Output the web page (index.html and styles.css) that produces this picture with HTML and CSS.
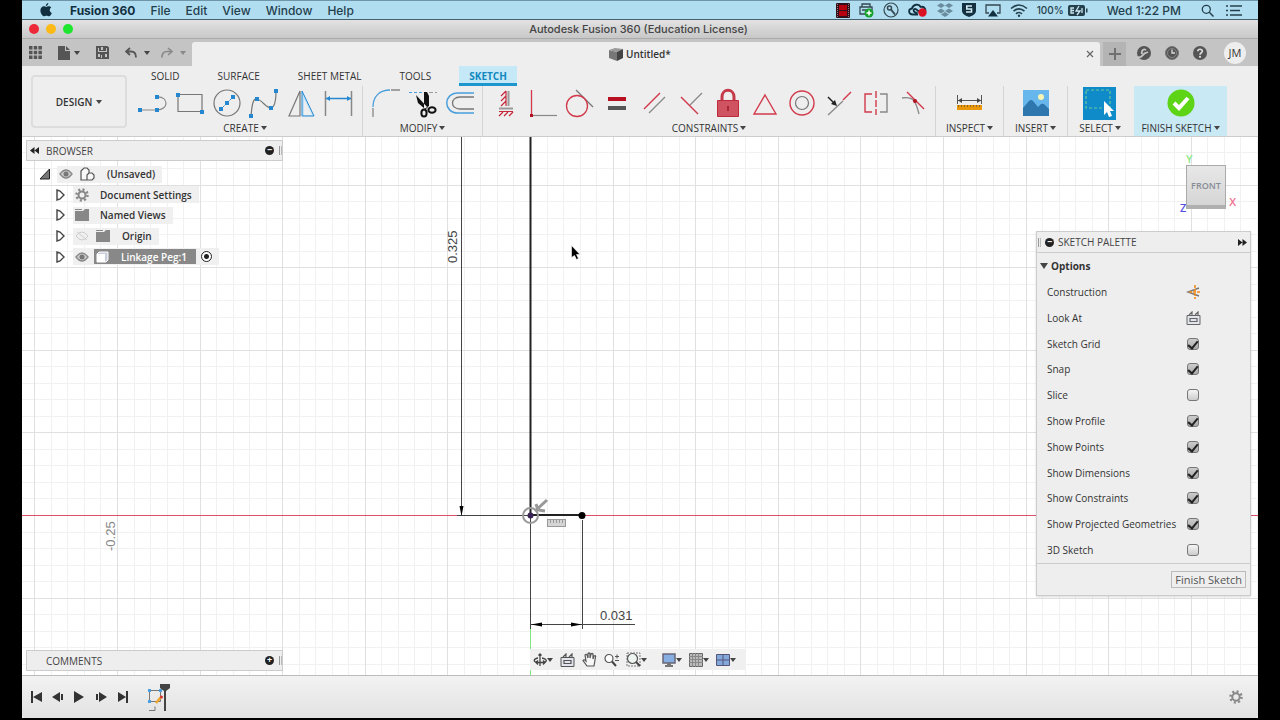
FILE: index.html
```html
<!DOCTYPE html>
<html lang="en">
<head>
    <meta charset="UTF-8">
    <meta name="viewport" content="width=device-width, initial-scale=1.0">
    <title>Autodesk Fusion 360 (Education License)</title>
    <link rel="stylesheet" href="styles.css">
</head>
<body>
<div class="app">
    <!-- system menu bar -->
    <header class="menubar">
        <nav class="menus">
            <svg class="apple" width="12" height="14" viewBox="0 0 12 14"><path fill="#12303f" d="M8.300 0C8.400 1.500 7.200 3 5.800 3 5.700 1.600 7 .2 8.300 0zM6.100 3.900c.6 0 1.500-.7 2.600-.7 1 0 2 .5 2.600 1.400-2.300 1.400-1.900 4.500.5 5.400C11.200 11.700 10.200 13.300 9 13.300c-1 0-1.300-.6-2.500-.6s-1.600.6-2.500.6C2.300 13.300.4 10.300.4 7.600c0-2.700 1.700-4.300 3.400-4.300 1.100 0 1.800.6 2.300.6z"/></svg>
            <a href="#" class="app-name">Fusion 360</a>
            <a href="#">File</a>
            <a href="#">Edit</a>
            <a href="#">View</a>
            <a href="#">Window</a>
            <a href="#">Help</a>
        </nav>
        <div class="status">
            <svg width="14" height="15" viewBox="0 0 14 15"><rect width="14" height="15" rx="1" fill="#30101a"/><path fill="#b4000f" d="M3 2h8v5H3zM3 8h8v5H3z"/><path stroke="#a77" stroke-dasharray="1 1" d="M1.500 1v13M12.500 1v13"/></svg>
            <svg width="15" height="15" viewBox="0 0 15 15"><path fill="none" stroke="#344850" stroke-width="1.300" d="M3 4V1h8v3M1 4h12v7H1zM3 7h8"/><circle cx="10" cy="10" r="4.500" fill="#16a02c"/><path stroke="#fff" stroke-width="1.500" d="M10 7.500v5M7.500 10h5"/></svg>
            <svg width="16" height="16" viewBox="0 0 16 16"><circle cx="8" cy="8" r="7" fill="none" stroke="#344850" stroke-width="1.200"/><circle cx="6.500" cy="6" r="2" fill="none" stroke="#344850" stroke-width="1.500"/><path stroke="#344850" stroke-width="2" d="M8 7.500l4 5"/></svg>
            <svg width="20" height="14" viewBox="0 0 20 14"><path fill="none" stroke="#12303f" stroke-width="1.800" d="M10 11.500H5C0 11.500 0 6 4 5.500 5 1 11 .5 12.500 4c3-1 5 1 5 4M9.500 10C4 9.500 5 4.500 8.500 6.500l4 3.500"/><circle cx="14.500" cy="9.500" r="4.200" fill="#dc1325"/></svg>
            <svg width="16" height="14" viewBox="0 0 16 14"><path fill="#6a8d9d" d="M4 0l4 2.500L4 5 0 2.500zM12 0l4 2.500L12 5 8 2.500zM4 5.500L8 8l-4 2.500L0 8zM12 5.500L16 8l-4 2.500L8 8zM8 9l4 2.500L8 14l-4-2.500z"/></svg>
            <svg width="14" height="14" viewBox="0 0 14 14"><path fill="#12303f" d="M0 0h14v8c0 3-4 5-7 6-3-1-7-3-7-6z"/><path fill="none" stroke="#d3ecf6" stroke-width="1.600" d="M10 3H4.800V6h4.700v3H4"/></svg>
            <svg width="16" height="13" viewBox="0 0 16 13"><path fill="none" stroke="#344850" stroke-width="1.300" d="M4 9H1V1h14v8h-3"/><path fill="#12303f" d="M8 6l5 6.500H3z"/></svg>
            <svg width="18" height="13" viewBox="0 0 18 13"><path fill="none" stroke="#24404c" stroke-width="1.600" d="M1 4.500q8-7 16 0M3.500 7.200q5.500-4.700 11 0M6 9.800q3-2.600 6 0"/><circle cx="9" cy="11.700" r="1.200" fill="#24404c"/></svg>
            <span class="battery">100%
                <svg width="20" height="11" viewBox="0 0 20 11"><rect width="17" height="11" rx="2" fill="#24404c"/><path fill="#24404c" d="M18 3.500h1.500v4H18z"/><path fill="none" stroke="#cde8f3" stroke-width="1.300" d="M6 3H3v5h3M3 5.500h3M11 1L8 6h4l-3 4M14 3v5"/></svg>
            </span>
            <span class="clock">Wed 1:22 PM</span>
            <svg class="search" width="13" height="13" viewBox="0 0 13 13"><circle cx="5.300" cy="5.300" r="4" fill="none" stroke="#24404c" stroke-width="1.300"/><path stroke="#24404c" stroke-width="1.500" d="M8.300 8.300L12.500 12.500"/></svg>
            <svg width="16" height="11" viewBox="0 0 16 11"><path stroke="#24404c" stroke-width="1.500" d="M0 1h2M4 1h12M0 5.500h2M4 5.500h10M0 10h2M4 10h12"/></svg>
        </div>
    </header>

    <!-- window title -->
    <div class="titlebar">
        <span class="light red"></span><span class="light amber"></span><span class="light green"></span>
        <h1>Autodesk Fusion 360 (Education License)</h1>
    </div>

    <!-- document tabs -->
    <div class="tabbar">
        <div class="quick">
            <button class="q-grid"><svg width="13" height="13" viewBox="0 0 13 13"><path fill="#555" d="M0 0h3.500v3.500H0zM4.700 0h3.500v3.500H4.700zM9.400 0h3.500v3.500H9.400zM0 4.700h3.500v3.500H0zM4.700 4.700h3.500v3.500H4.700zM9.400 4.700h3.500v3.500H9.400zM0 9.400h3.500v3.500H0zM4.700 9.400h3.500v3.500H4.700zM9.400 9.400h3.500v3.500H9.400z"/></svg></button>
            <button class="q-file"><svg width="12" height="14" viewBox="0 0 12 14"><path fill="#555" d="M0 0h7v5h5v9H0zM8 0l4 4H8z"/></svg><i class="caret"></i></button>
            <button class="q-save"><svg width="13" height="13" viewBox="0 0 13 13"><path fill="none" stroke="#555" stroke-width="2" d="M1 1h10l1 1v10H1z"/><path fill="#555" d="M3 0h7v5H3zM2 6h9v2H2zM4 8h5v5H4z"/><path fill="#c4c4c4" d="M5 1h2v3H5zM5 9h1v3H5z"/></svg></button>
            <button class="q-undo"><svg width="12" height="12" viewBox="0 0 12 12"><path fill="none" stroke="#555" stroke-width="1.800" d="M5 1L1 4.500 5 8M1 4.500h5c4 0 5 2.500 5 6"/></svg><i class="caret"></i></button>
            <button class="q-redo"><svg width="12" height="12" viewBox="0 0 12 12"><path fill="none" stroke="#8a8a8a" stroke-width="1.600" d="M7 1l4 3.500L7 8M11 4.500H6c-4 0-5 2.500-5 6"/></svg><i class="caret"></i></button>
        </div>
        <div class="doc-tab">
            <svg width="14" height="13" viewBox="0 0 14 13"><path fill="#777" d="M0 2l8 2v9L0 10z"/><path fill="#999" d="M0 2l6-2 8 1-6 3z"/><path fill="#444" d="M8 4l6-3v9l-6 3z"/></svg>
            <span>Untitled*</span>
            <button class="close"><svg width="8" height="8" viewBox="0 0 8 8"><path stroke="#666" stroke-width="1.200" d="M1 1l6 6M7 1L1 7"/></svg></button>
        </div>
        <button class="new-tab"><svg width="12" height="12" viewBox="0 0 12 12"><path stroke="#707070" stroke-width="2" d="M6 0v12M0 6h12"/></svg></button>
        <div class="account">
            <button><svg width="14" height="14" viewBox="0 0 14 14"><circle cx="7" cy="7" r="7" fill="#555"/><path fill="none" stroke="#c4c4c4" stroke-width="1.800" d="M0 11.500l4-.5 4-4M5 8C4 4 7 2.500 9 4M7.500 7.500L11 6"/></svg></button>
            <button><svg width="14" height="14" viewBox="0 0 14 14"><circle cx="7" cy="7" r="6.500" fill="#555" stroke="#777"/><circle cx="7" cy="7" r="4.500" fill="none" stroke="#999" stroke-width=".7"/><path fill="none" stroke="#ddd" stroke-width="1.300" d="M7 3.500V7h3"/></svg></button>
            <button><svg width="14" height="14" viewBox="0 0 14 14"><circle cx="7" cy="7" r="7" fill="#555"/><path fill="none" stroke="#ddd" stroke-width="1.700" d="M4.800 5.300C5 2.500 9.500 2.700 9.300 5.300 9.200 6.800 7 7 7 8.800"/><circle cx="7" cy="10.800" r="1.100" fill="#ddd"/></svg></button>
            <button class="avatar">JM</button>
        </div>
    </div>

    <!-- ribbon -->
    <div class="ribbon">
        <button class="workspace">DESIGN <i class="caret"></i></button>
        <div class="ribbon-main">
            <nav class="ribbon-tabs">
                <button>SOLID</button>
                <button>SURFACE</button>
                <button>SHEET METAL</button>
                <button>TOOLS</button>
                <button class="active">SKETCH</button>
            </nav>
            <div class="groups">
                <section class="group create">
                    <div class="tools">
                        <button><svg width="30" height="30" viewBox="0 0 30 30"><path fill="none" stroke="#888" stroke-width="1.200" d="M2 22h17M19 9c12-1 12 13 0 13"/><path fill="#2487cf" d="M0 20h4v4H0zM17 20h4v4h-4zM17 7h4v4h-4z"/></svg></button>
                        <button><svg width="30" height="30" viewBox="0 0 30 30"><path fill="none" stroke="#777" stroke-width="1.200" d="M3 6.500h24v17H3z"/><path fill="#2487cf" d="M1 5h4v4H1zM25 22h4v4h-4z"/></svg></button>
                        <button><svg width="30" height="30" viewBox="0 0 30 30"><circle cx="15" cy="15" r="13" fill="none" stroke="#777" stroke-width="1.200"/><path stroke="#2487cf" stroke-dasharray="2 1" d="M9 21L21 9"/><path fill="#2487cf" d="M7 19h4v4H7zM13 13h4v4h-4zM19 7h4v4h-4z"/></svg></button>
                        <button><svg width="30" height="30" viewBox="0 0 30 30"><path fill="none" stroke="#777" stroke-width="1.200" d="M2 28C3 17 4 10 8 11c5 1 9 9 14 9 4-1 5-8 5-17"/><path fill="#2487cf" d="M0 26h4v4H0zM6 9h4v4H6zM20 18h4v4h-4zM25 1h4v4h-4z"/></svg></button>
                        <button><svg width="30" height="30" viewBox="0 0 30 30"><path fill="none" stroke="#777" stroke-width="1.200" d="M14 3v25H3z"/><path fill="#bfe2f6" stroke="#2487cf" d="M16 3l12 25H16z"/><path fill="#eee" d="M18 11l8 16h-8z"/></svg></button>
                        <button><svg width="30" height="30" viewBox="0 0 30 30"><path stroke="#888" stroke-width="1.500" d="M2.500 3v25M28.500 3v25"/><path stroke="#2487cf" stroke-width="1.500" d="M3 10.500h25"/><path fill="#2487cf" d="M3 10.500l4-2.500v5zM28 10.500l-4-2.500v5z"/></svg></button>
                    </div>
                    <button class="group-label">CREATE <i class="caret"></i></button>
                </section>
                <section class="group">
                    <div class="tools">
                        <button><svg width="30" height="30" viewBox="0 0 30 30"><path fill="none" stroke="#4a9fdc" stroke-width="1.300" d="M2 19C2 8 9 2 19 2"/><path stroke="#888" stroke-width="1.300" d="M2 20v9M20 2h9"/></svg></button>
                        <button><svg width="30" height="30" viewBox="0 0 30 30"><path stroke="#4a9fdc" stroke-dasharray="3 2" d="M1 4.500h13"/><path stroke="#999" stroke-dasharray="4 2" d="M21 4.500h8"/><path fill="#111" d="M8 7l2 8 7 6 3-1zM16 4h3l2 4v10l-5 3z"/><g fill="none" stroke="#111" stroke-width="2"><ellipse cx="16" cy="25" rx="2.600" ry="3.500"/><ellipse cx="24" cy="22" rx="3.600" ry="2.800"/></g></svg></button>
                        <button><svg width="30" height="30" viewBox="0 0 30 30"><path fill="none" stroke="#4a9fdc" stroke-width="1.500" d="M29 5H13C-2 5-2 25 13 25h16"/><path fill="none" stroke="#777" stroke-width="1.300" d="M29 9H15c-10 0-10 12 0 12h14"/></svg></button>
                    </div>
                    <button class="group-label">MODIFY <i class="caret"></i></button>
                </section>
                <section class="group">
                    <div class="tools">
                        <button><svg width="30" height="30" viewBox="0 0 30 30"><path stroke="#999" stroke-width="2" d="M17.500 3v15M8 20.500h14"/><path fill="none" stroke="#c6283b" stroke-width="1.200" d="M15 3v15M10 8l5-5M10 13l5-5M10 18l5-5M8 23.500h14M8 28l4-4M13 28l4-4M18 28l4-4"/></svg></button>
                        <button><svg width="30" height="30" viewBox="0 0 30 30"><path stroke="#888" stroke-width="1.200" d="M4 27.500h25"/><path stroke="#d23a4c" stroke-width="1.300" d="M3.500 2v26"/><path fill="#b31022" d="M2 26h3v3H2z"/></svg></button>
                        <button><svg width="30" height="30" viewBox="0 0 30 30"><path stroke="#777" stroke-width="1.200" d="M11 2l17 17"/><circle cx="12" cy="18" r="10.500" fill="none" stroke="#d23a4c" stroke-width="1.300"/></svg></button>
                        <button><svg width="30" height="30" viewBox="0 0 30 30"><path fill="#b80f21" d="M6 9h18v4H6z"/><path fill="#555" d="M6 18h18v4H6z"/></svg></button>
                        <button><svg width="30" height="30" viewBox="0 0 30 30"><path stroke="#d23a4c" stroke-width="1.400" d="M5 21L21 5"/><path stroke="#888" stroke-width="1.200" d="M10 25L26 9"/></svg></button>
                        <button><svg width="30" height="30" viewBox="0 0 30 30"><path stroke="#888" stroke-width="1.200" d="M14 17L26 5"/><path stroke="#d23a4c" stroke-width="1.400" d="M5 9l17 17"/></svg></button>
                        <button><svg width="30" height="30" viewBox="0 0 30 30"><path fill="none" stroke="#c43a49" stroke-width="3" d="M9 13V9C9 0 21 0 21 9v4"/><path fill="#d05362" stroke="#bd2b3d" d="M4.500 12.500h21v16h-21z"/><path stroke="#9e1728" stroke-width="1.500" d="M15 18v5"/></svg></button>
                        <button><svg width="30" height="30" viewBox="0 0 30 30"><path fill="none" stroke="#d23a4c" stroke-width="1.400" d="M15 7l11 19H4z"/></svg></button>
                        <button><svg width="30" height="30" viewBox="0 0 30 30"><circle cx="15" cy="15" r="12" fill="none" stroke="#d23a4c" stroke-width="1.400"/><circle cx="15" cy="15" r="6.500" fill="none" stroke="#777" stroke-width="1.200"/></svg></button>
                        <button><svg width="30" height="30" viewBox="0 0 30 30"><path stroke="#888" stroke-width="1.300" d="M4 27l15-14"/><path stroke="#d23a4c" stroke-width="1.400" d="M19 12l8-8"/><path stroke="#222" stroke-width="1.500" d="M4 9l7 7"/><path fill="#222" d="M13 18l-6-2 4-4z"/></svg></button>
                        <button><svg width="30" height="30" viewBox="0 0 30 30"><path fill="none" stroke="#d23a4c" stroke-width="1.400" d="M11 6H4v18h7"/><path stroke="#d23a4c" stroke-width="1.400" stroke-dasharray="7 2" d="M15 3v24"/><path fill="none" stroke="#888" stroke-width="1.400" d="M19 6h7v18h-7"/></svg></button>
                        <button><svg width="30" height="30" viewBox="0 0 30 30"><path fill="none" stroke="#888" stroke-width="1.300" d="M4 10c12-2 14 4 17 16"/><path stroke="#d23a4c" stroke-width="1.400" d="M9 4l17 17"/><circle cx="17" cy="13" r="2" fill="#b31022"/></svg></button>
                    </div>
                    <button class="group-label">CONSTRAINTS <i class="caret"></i></button>
                </section>
                <section class="group inspect">
                    <div class="tools">
                        <button><svg width="30" height="30" viewBox="0 0 30 30"><path stroke="#555" d="M2.500 7v9M26.500 7v9M3 12.500h23"/><path fill="#444" d="M3 12.500l4-2.500v5zM26 12.500l-4-2.500v5z"/><path fill="#e9980c" d="M2 17h25v5H2z"/><path stroke="#936619" stroke-dasharray="1 2" stroke-width="2" d="M3 18h23"/></svg></button>
                    </div>
                    <button class="group-label">INSPECT <i class="caret"></i></button>
                </section>
                <section class="group insert">
                    <div class="tools">
                        <button><svg width="30" height="30" viewBox="0 0 30 30"><path fill="#67b6ec" d="M2 2h26v26H2z"/><path fill="#2e76ae" d="M2 20l6-7q2-2 4 0l5 6 3-3q2-1 4 1l4 4v7H2z"/><circle cx="20" cy="9" r="3" fill="#f7f4b4"/></svg></button>
                    </div>
                    <button class="group-label">INSERT <i class="caret"></i></button>
                </section>
                <section class="group select">
                    <div class="tools">
                        <button><svg width="34" height="34" viewBox="0 0 34 34"><path fill="#108bc9" d="M0 1h33v33H0z"/><path fill="none" stroke="#69c99b" stroke-width="1.200" stroke-dasharray="3 2" d="M3 4h24v18H3z"/><path fill="#fff" d="M21 15v14l3-3 2 5 3-1-2-5h4z"/></svg></button>
                    </div>
                    <button class="group-label">SELECT <i class="caret"></i></button>
                </section>
                <section class="group finish">
                    <div class="tools">
                        <button><svg width="30" height="30" viewBox="0 0 30 30"><circle cx="15" cy="15" r="13.500" fill="#5dd416"/><path fill="none" stroke="#fff" stroke-width="4" d="M8 15l5 5 9-10"/></svg></button>
                    </div>
                    <button class="group-label">FINISH SKETCH <i class="caret"></i></button>
                </section>
            </div>
        </div>
    </div>

    <!-- drawing area -->
    <main class="canvas">
        <svg class="sketch" width="100%" height="100%">
            <defs>
                <pattern id="grid" x="508" y="378" width="413" height="413" patternUnits="userSpaceOnUse">
                    <path class="minor" d="M17.500 0v413M33.500 0v413M50.500 0v413M66.500 0v413M99.500 0v413M116.500 0v413M132.500 0v413M149.500 0v413M182.500 0v413M198.500 0v413M215.500 0v413M231.500 0v413M264.500 0v413M281.500 0v413M297.500 0v413M314.500 0v413M347.500 0v413M363.500 0v413M380.500 0v413M396.500 0v413"/>
                    <path class="minor" d="M0 17.500h413M0 33.500h413M0 50.500h413M0 66.500h413M0 99.500h413M0 116.500h413M0 132.500h413M0 149.500h413M0 182.500h413M0 198.500h413M0 215.500h413M0 231.500h413M0 264.500h413M0 281.500h413M0 297.500h413M0 314.500h413M0 347.500h413M0 363.500h413M0 380.500h413M0 396.500h413"/>
                    <path class="major" d="M.5 0v413M83.500 0v413M165.500 0v413M248.500 0v413M330.500 0v413M0 .5h413M0 83.500h413M0 165.500h413M0 248.500h413M0 330.500h413"/>
                </pattern>
            </defs>
            <rect width="100%" height="100%" fill="url(#grid)"/>
            <rect class="x-line" y="378" width="100%" height="1"/>
            <g transform="translate(-22 -137)">
                <path stroke="#7ee87e" d="M530.500 625v50"/>
                <path class="dim" d="M461.500 137v378M457 515.500h73M530.500 516v113M582.500 520v109M531 624.500h104"/>
                <path class="edge" d="M530.500 137v378h52"/>
                <path d="M461.500 516l-2-10h4zM531 624.500l11-2v4zM582 624.500l-11-2v4z"/>
                <circle cx="582" cy="515.500" r="3.500"/>
                <g fill="none" stroke="#999">
                    <circle cx="530.500" cy="515.500" r="7.500" stroke-width="2"/>
                    <path stroke-width="3" d="M535 511l12-11M536 504l2 6 7 1"/>
                </g>
                <circle cx="530.500" cy="515.500" r="3" fill="#3b2455"/>
                <rect x="547.500" y="519.500" width="18" height="7" fill="#d5d5d5" stroke="#999"/>
                <path stroke="#999" d="M550.500 520v3M553.500 520v3M556.500 520v3M559.500 520v3M562.500 520v3"/>
                <text class="dim-text" x="600" y="620">0.031</text>
                <text class="dim-text" transform="translate(457 263) rotate(-90)">0.325</text>
                <text class="dim-text faint" transform="translate(115 551) rotate(-90)">-0.25</text>
                <path stroke="#fff" stroke-width=".6" d="M571.500 245.500v12l3-2 2 4 2-1-2-4h3.500z"/>
            </g>
        </svg>

        <aside class="browser">
            <header class="panel-head">
                <svg width="9" height="7" viewBox="0 0 9 7"><path fill="#222" d="M4.500 0v7L0 3.500zM9 0v7L4.500 3.500z"/></svg>
                <h2>BROWSER</h2>
                <span class="dot">&#8722;</span><i class="grip"></i>
            </header>
            <ul class="tree">
                <li class="root">
                    <svg width="12" height="12" viewBox="0 0 12 12"><path fill="#777" stroke="#222" d="M10.500 1v10H1z"/></svg>
                    <span class="node">
                        <svg width="14" height="10" viewBox="0 0 14 10"><path fill="#ccc" stroke="#888" stroke-width="1.300" d="M1 5q6-8 12 0-6 8-12 0z"/><circle cx="7" cy="5" r="2.500" fill="#777"/></svg>
                        <svg class="comp" width="15" height="14" viewBox="0 0 15 14"><path fill="#f8f8f8" stroke="#555" stroke-width="1.200" d="M1 4l3-3h3l2 2v3h3l2 2v3l-2 2H1zM7 13V8l2-2"/></svg>
                        <span>(Unsaved)</span>
                    </span>
                </li>
                <li>
                    <svg class="arrow" width="9" height="12" viewBox="0 0 9 12"><path fill="#fff" stroke="#444" stroke-width="1.400" d="M1 1v10l3-1 4-4-4-4z"/></svg>
                    <span class="node">
                        <svg width="14" height="14" viewBox="0 0 14 14"><circle cx="7" cy="7" r="5.500" fill="none" stroke="#888" stroke-width="2.500" stroke-dasharray="2 2.300"/><circle cx="7" cy="7" r="3.500" fill="none" stroke="#888" stroke-width="2"/></svg>
                        <span>Document Settings</span>
                    </span>
                </li>
                <li>
                    <svg class="arrow" width="9" height="12" viewBox="0 0 9 12"><path fill="#fff" stroke="#444" stroke-width="1.400" d="M1 1v10l3-1 4-4-4-4z"/></svg>
                    <span class="node">
                        <svg width="14" height="12" viewBox="0 0 14 12"><path fill="#888" d="M0 2h8l2-2h4v12H0zM0 0h7v1H0z"/></svg>
                        <span>Named Views</span>
                    </span>
                </li>
                <li>
                    <svg class="arrow" width="9" height="12" viewBox="0 0 9 12"><path fill="#fff" stroke="#444" stroke-width="1.400" d="M1 1v10l3-1 4-4-4-4z"/></svg>
                    <span class="node nested">
                        <svg width="14" height="10" viewBox="0 0 14 10"><path fill="none" stroke="#ccc" d="M1 5q6-8 12 0-6 8-12 0zM2 1l10 8"/></svg>
                        <svg width="14" height="12" viewBox="0 0 14 12"><path fill="#888" d="M0 2h8l2-2h4v12H0zM0 0h7v1H0z"/></svg>
                        <span>Origin</span>
                    </span>
                </li>
                <li>
                    <svg class="arrow" width="9" height="12" viewBox="0 0 9 12"><path fill="#fff" stroke="#444" stroke-width="1.400" d="M1 1v10l3-1 4-4-4-4z"/></svg>
                    <span class="node with-radio">
                        <svg width="14" height="10" viewBox="0 0 14 10"><path fill="#ccc" stroke="#888" stroke-width="1.300" d="M1 5q6-8 12 0-6 8-12 0z"/><circle cx="7" cy="5" r="2.500" fill="#777"/></svg>
                        <span class="selected">
                            <svg width="13" height="12" viewBox="0 0 13 12"><path fill="#c9cede" stroke="#fff" d="M1 3l2-2h9v8l-2 2H1z"/><path fill="#fff" d="M1 3h8v8H1z"/></svg>
                            <label for="activate">Linkage Peg:1</label>
                        </span>
                        <input type="radio" id="activate" checked>
                    </span>
                </li>
            </ul>
        </aside>

        <div class="cube">
            <span class="axis y">Y</span>
            <span class="axis z">Z</span>
            <span class="axis x">X</span>
            <button class="face">FRONT</button>
        </div>

        <aside class="palette">
            <header class="panel-head">
                <i class="grip"></i><span class="dot">&#8722;</span>
                <h2>SKETCH PALETTE</h2>
                <svg width="9" height="7" viewBox="0 0 9 7"><path fill="#222" d="M0 0v7l4.500-3.500zM4.500 0v7L9 3.500z"/></svg>
            </header>
            <h3><i class="caret"></i>Options</h3>
            <div class="options">
                <div class="row"><label for="construction">Construction</label><button id="construction"><svg width="15" height="14" viewBox="0 0 15 14"><path fill="none" stroke="#777" stroke-width="1.400" d="M13 3L2 7l11 4"/><path stroke="#f08c1c" stroke-width="1.600" stroke-dasharray="3 1" d="M9 0v14M3 7h11"/></svg></button></div>
                <div class="row"><label for="lookat">Look At</label><button id="lookat"><svg width="15" height="14" viewBox="0 0 15 14"><path fill="#e1e4ec" stroke="#666" d="M1 4.500h13v9H1z"/><path fill="none" stroke="#666" stroke-width="1.200" d="M4 7.500h7v3H4zM3 4l3-3v3M9 4l3-3v3"/></svg></button></div>
                <div class="row"><label for="grid-on">Sketch Grid</label><input type="checkbox" id="grid-on" checked></div>
                <div class="row"><label for="snap">Snap</label><input type="checkbox" id="snap" checked></div>
                <div class="row"><label for="slice">Slice</label><input type="checkbox" id="slice"></div>
                <div class="row"><label for="profile">Show Profile</label><input type="checkbox" id="profile" checked></div>
                <div class="row"><label for="points">Show Points</label><input type="checkbox" id="points" checked></div>
                <div class="row"><label for="dimensions">Show Dimensions</label><input type="checkbox" id="dimensions" checked></div>
                <div class="row"><label for="constraints">Show Constraints</label><input type="checkbox" id="constraints" checked></div>
                <div class="row"><label for="projected">Show Projected Geometries</label><input type="checkbox" id="projected" checked></div>
                <div class="row"><label for="sketch3d">3D Sketch</label><input type="checkbox" id="sketch3d"></div>
            </div>
            <footer><button>Finish Sketch</button></footer>
        </aside>

        <section class="comments panel-head">
            <h2>COMMENTS</h2>
            <span class="dot">+</span><i class="grip"></i>
        </section>

        <div class="navbar">
            <button><svg width="14" height="14" viewBox="0 0 14 14"><path fill="none" stroke="#444" stroke-width="1.300" d="M7 1v12M5.500 2.500L7 1l1.500 1.500M5 5C0 6 0 9 5 9.500h7M9 5c5 1 5 3 3 4M5 7.500l-2 2 2 2M10 7.500l2 2-2 2"/></svg><i class="caret"></i></button>
            <button><svg width="15" height="14" viewBox="0 0 15 14"><path fill="#e1e4ec" stroke="#555" d="M1 4.500h13v9H1z"/><path fill="none" stroke="#555" stroke-width="1.200" d="M4 7.500h7v3H4zM3 4l3-3v3M9 4l3-3v3"/></svg></button>
            <button><svg width="15" height="15" viewBox="0 0 15 15"><path fill="#f8f8f8" stroke="#555" stroke-width="1.200" d="M5 14L1 8.500q1-1.500 3 .5L3 3q1-1.500 2 0l1 3V1.500q1-1 2 0V6l1-4q1-1 2 0v5l1-3q2-1 1.500 1L12 14z"/></svg></button>
            <button><svg width="15" height="14" viewBox="0 0 15 14"><circle cx="5" cy="5.500" r="4" fill="#fff" stroke="#555" stroke-width="1.200"/><path stroke="#444" stroke-width="2" d="M8 8.500l4 4.500"/><path stroke="#555" d="M11 3.500h4M13 1.500v4M11 7.500h4"/></svg></button>
            <button class="fit"><svg width="15" height="15" viewBox="0 0 15 15"><path fill="none" stroke="#777" stroke-dasharray="2 1" d="M1 1h13v13H1z"/><circle cx="6.500" cy="6.500" r="5" fill="#eef5f1" stroke="#555" stroke-width="1.200"/><path stroke="#444" stroke-width="2" d="M10 10l4 4"/></svg><i class="caret"></i></button>
            <button><svg width="14" height="14" viewBox="0 0 14 14"><path fill="#86aee2" stroke="#667" stroke-width="1.500" d="M1 1h12v9H1z"/><path fill="#777" d="M5 10h4v2h2v2H3v-2h2z"/></svg><i class="caret"></i></button>
            <button><svg width="14" height="14" viewBox="0 0 14 14"><path fill="#bbb" stroke="#666" d="M.5.5h13v13H.5z"/><path stroke="#888" d="M3.500 0v14M6.500 0v14M9.500 0v14M0 3.500h14M0 6.500h14M0 9.500h14"/></svg><i class="caret"></i></button>
            <button><svg width="14" height="12" viewBox="0 0 14 12"><path fill="#83a8dc" stroke="#557" d="M.5.5h13v11H.5zM7 0v12M0 6h14"/></svg><i class="caret"></i></button>
        </div>
    </main>

    <!-- timeline -->
    <footer class="timeline">
        <div class="playback">
            <button><svg width="12" height="12" viewBox="0 0 12 12"><path fill="#333" d="M1 0h2v12H1zM12 1v10L3 6z"/></svg></button>
            <button><svg width="12" height="12" viewBox="0 0 12 12"><path fill="#333" d="M8 1v10L0 6zM9 3h2v6H9z"/></svg></button>
            <button><svg width="12" height="12" viewBox="0 0 12 12"><path fill="#333" d="M0 0v12l10-6z"/></svg></button>
            <button><svg width="12" height="12" viewBox="0 0 12 12"><path fill="#333" d="M3 1v10l8-5zM0 3h2v6H0z"/></svg></button>
            <button><svg width="12" height="12" viewBox="0 0 12 12"><path fill="#333" d="M8 0h2v12H8zM0 1v10l8-5z"/></svg></button>
        </div>
        <button class="feature"><svg width="24" height="28" viewBox="0 0 24 28"><path fill="none" stroke="#777" d="M2.500 7.500h11v11h-11zM2 27.500h6v-4"/><path fill="#4a9fdc" d="M1 6h3v3H1zM12 6h3v3h-3zM1 17h3v3H1z"/><path stroke="#eda52c" stroke-width="2.500" d="M9 20l5-6"/><circle cx="14.500" cy="14" r="1.500" fill="#d33"/><path fill="#444" d="M13 1h10v4l-4 3v20h-2V8l-4-3z"/></svg></button>
        <button class="settings"><svg width="14" height="14" viewBox="0 0 14 14"><circle cx="7" cy="7" r="5.500" fill="none" stroke="#888" stroke-width="2.500" stroke-dasharray="2 2.300"/><circle cx="7" cy="7" r="3.700" fill="none" stroke="#888" stroke-width="2"/></svg></button>
    </footer>
</div>
</body>
</html>
```
FILE: styles.css
```css
* {
    box-sizing: border-box;
}
body {
    margin: 0;
    padding: 0 22px 2px;
    background-color: #000;
    font-family: 'Open Sans', 'Noto Sans', sans-serif;
    font-size: 10px;
    color: #333;
}
h1, h2, h3, ul {
    margin: 0;
    padding: 0;
}
button {
    display: flex;
    align-items: center;
    justify-content: center;
    padding: 0;
    border: none;
    background: none;
    font: inherit;
    color: inherit;
    white-space: nowrap;
}
svg {
    display: block;
    flex: none;
}
.caret {
    flex: none;
    border: 3px solid transparent;
    border-top: 4px solid #444;
    border-bottom: none;
}
.app {
    display: flex;
    flex-direction: column;
    min-height: calc(100vh - 2px);
    background-color: #eee;
}

/* system menu bar */
.menubar {
    display: flex;
    justify-content: space-between;
    align-items: center;
    height: 20px;
    padding: 0 16px 0 18px;
    background-color: #b1ddf0;
    border-top: 1px solid #6f96a8;
    border-bottom: 1px solid #45606f;
    font-family: Inter, sans-serif;
    font-size: 12px;
    font-weight: 500;
}
.menus, .status {
    display: flex;
    align-items: center;
}
.menus {
    gap: 15px;
}
.menus a {
    color: #24404c;
    text-decoration: none;
}
.menus .app-name {
    margin-left: 3px;
    font-weight: 700;
    color: #12303f;
}
.status {
    gap: 9px;
    color: #24404c;
}
.battery {
    display: flex;
    align-items: center;
    gap: 4px;
    font-size: 10px;
}
.clock {
    margin: 0 11px 0 10px;
}
.search {
    margin-right: 3px;
}

/* window title */
.titlebar {
    display: flex;
    align-items: center;
    gap: 7px;
    height: 19px;
    padding: 0 7px;
    background: linear-gradient(#e2e2e2, #c8c8c8);
    border-bottom: 1px solid #aaa;
}
.titlebar h1 {
    flex: 1;
    padding-right: 54px;
    text-align: center;
    font: 500 11px Inter, sans-serif;
    color: #444;
}
.light {
    width: 10px;
    height: 10px;
    border-radius: 50%;
}
.red { background-color: #ed2939; }
.amber { background-color: #fdb915; }
.green { background-color: #1ee52d; }

/* document tabs */
.tabbar {
    display: flex;
    height: 27px;
    padding-top: 3px;
    background-color: #c4c4c4;
}
.quick {
    display: flex;
    align-items: center;
    width: 170px;
    padding: 0 7px 3px;
    gap: 16px;
}
.quick button {
    gap: 4px;
}
.q-redo .caret {
    border-top-color: #888;
}
.quick .q-undo, .quick .q-redo {
    gap: 7px;
}
.quick .q-redo {
    margin-left: -5px;
}
.doc-tab {
    flex: 1;
    display: flex;
    align-items: center;
    gap: 3px;
    padding: 0 6px 0 417px;
    background-color: #eee;
    border-radius: 3px 3px 0 0;
    font-weight: 600;
}
.close {
    margin-left: auto;
}
.new-tab {
    width: 23px;
    margin-left: 3px;
    background-color: #b4b4b4;
}
.account {
    display: flex;
    align-items: center;
    gap: 14px;
    padding: 0 12px 3px 11px;
}
.account .avatar {
    width: 22px;
    height: 22px;
    margin-left: 3px;
    border-radius: 50%;
    background-color: #eee;
    font-size: 11px;
    font-weight: 500;
}

/* ribbon */
.ribbon {
    display: flex;
    height: 71px;
    padding-left: 9px;
    border-bottom: 1px solid #ccc;
    font-weight: 500;
}
.workspace {
    width: 96px;
    height: 53px;
    margin: 9px 5px 0 0;
    gap: 4px;
    border: 2px solid #ddd;
    border-radius: 4px;
    font-weight: 600;
}
.ribbon-main {
    flex: 1;
}
.ribbon-tabs {
    display: flex;
    gap: 18px;
    height: 20px;
    padding-left: 9px;
}
.ribbon-tabs button {
    padding: 0 10px;
}
.ribbon-tabs .active {
    background-color: #c5e9f7;
    border-bottom: 3px solid #1d96cd;
    color: #1188c0;
    font-weight: 700;
    padding-top: 3px;
}
.groups {
    display: flex;
    height: 50px;
}
.group {
    display: flex;
    flex-direction: column;
    align-items: center;
    padding: 0 4px;
    border-right: 1px solid #d5d5d5;
}
.group.create {
    padding: 0 6px 0 2px;
}
.tools {
    display: flex;
}
.tools button {
    width: 37px;
    height: 34px;
}
.group-label {
    height: 16px;
    gap: 2px;
}
.inspect { width: 68px; }
.insert, .select { width: 64px; }
.group.select {
    border-right: none;
}
.finish {
    width: 93px;
    margin-left: 2px;
    border-right: none;
    background-color: #c9e9f4;
}

/* drawing area */
.canvas {
    position: relative;
    flex: 1;
    min-height: 538px;
    overflow: hidden;
    background-color: #fff;
}
.sketch {
    position: absolute;
    inset: 0;
}
.minor { stroke: #f1f1f1; }
.major { stroke: #e0e0e0; }
.x-line { fill: #dc5068; }
.dim { stroke: #444; fill: none; }
.edge { stroke: #222; stroke-width: 2; fill: none; }
.dim-text {
    font: 13px 'Liberation Sans', sans-serif;
    fill: #444;
}
.faint { fill: #888; }

.panel-head {
    display: flex;
    align-items: center;
    height: 21px;
    background-color: #eee;
    border: 1px solid #ccc;
}
.panel-head h2 {
    flex: 1;
    font-size: 10px;
    font-weight: 500;
    color: #444;
}
.dot {
    width: 9px;
    height: 9px;
    border-radius: 50%;
    background-color: #222;
    color: #fff;
    font-size: 9px;
    font-weight: 700;
    line-height: 8px;
    text-align: center;
}
.grip {
    width: 3px;
    height: 9px;
    border-left: 1px solid #999;
    border-right: 1px solid #bbb;
}
.browser {
    position: absolute;
    left: 4px;
    top: 3px;
    width: 257px;
}
.browser .panel-head, .comments {
    gap: 5px;
}
.browser .panel-head {
    padding-left: 3px;
}
.browser h2 {
    padding-left: 2px;
}
.comments {
    position: absolute;
    left: 4px;
    bottom: 4px;
    width: 257px;
    padding-left: 19px;
}

.tree {
    display: grid;
    height: 103px;
    margin-top: 3px;
    padding-left: 28px;
    list-style: none;
    font-weight: 600;
}
.tree li {
    display: flex;
    align-items: center;
    gap: 8px;
}
.tree .root {
    gap: 6px;
    margin-left: -15px;
}
.tree .arrow {
    margin-left: 2px;
}
.node {
    display: flex;
    align-items: center;
    gap: 11px;
    height: 17px;
    padding: 0 7px 0 2px;
    background-color: #f0f0f0;
}
.root .node {
    padding-left: 2px;
}
.root .comp {
    margin: 0 1px 0 -4px;
}
.nested {
    gap: 7px;
}
.nested span {
    padding-left: 5px;
}
.with-radio {
    gap: 5px;
}
.selected {
    display: flex;
    align-items: center;
    gap: 12px;
    height: 15px;
    padding: 0 9px 0 2px;
    background-color: #888;
    color: #fff;
}
.with-radio input {
    appearance: none;
    width: 11px;
    height: 11px;
    margin: 0;
    border: 1px solid #222;
    border-radius: 50%;
    background: radial-gradient(#222 2px, #fff 3px);
}

/* view cube */
.cube {
    position: absolute;
    top: 16px;
    right: 22px;
    width: 52px;
    height: 62px;
}
.face {
    position: absolute;
    left: 2px;
    top: 12px;
    width: 40px;
    height: 44px;
    background: linear-gradient(#e8e8e8, #d5d5d5);
    border: 1px solid #aaa;
    border-bottom: 4px solid #b0b0b0;
    color: #888c96;
    font-weight: 600;
    font-size: 9px;
}
.axis {
    position: absolute;
    font-size: 11px;
    font-weight: 600;
    line-height: 12px;
}
.y { left: 2px; top: 0; color: #8ae98a; }
.z { left: -4px; bottom: 1px; color: #5550e5; }
.x { right: 0; bottom: 7px; color: #f0708e; }

/* sketch palette */
.palette {
    position: absolute;
    top: 94px;
    right: 7px;
    width: 215px;
    background-color: #eee;
    border: 1px solid #ccc;
    box-shadow: 0 1px 2px rgba(0,0,0,0.15);
    font-weight: 500;
}
.palette .panel-head {
    gap: 4px;
    padding: 0 3px 0 1px;
    border-width: 0 0 1px;
}
.palette h3 {
    display: flex;
    align-items: center;
    gap: 3px;
    height: 26px;
    padding-left: 3px;
    font-size: 10px;
    font-weight: 700;
}
.palette h3 .caret {
    border-width: 6px 4px 0;
}
.options {
    display: grid;
    grid-auto-rows: 1fr;
    height: 284px;
    padding: 0 49px 0 10px;
}
.row {
    display: flex;
    align-items: center;
    justify-content: space-between;
    white-space: nowrap;
}
.row input {
    appearance: none;
    display: flex;
    justify-content: center;
    width: 12px;
    height: 12px;
    margin: 0 2px;
    border: 1px solid #777;
    border-radius: 3px;
    background: linear-gradient(#f5f5f5, #ccc);
}
.row input:checked {
    background: linear-gradient(#ccc, #aaa);
}
.row input:checked::after {
    content: "";
    width: 4px;
    height: 8px;
    border: solid #222;
    border-width: 0 2px 2px 0;
    transform: rotate(40deg);
}
.palette footer {
    display: flex;
    justify-content: flex-end;
    padding: 7px 4px;
    border-top: 1px solid #ccc;
}
.palette footer button {
    height: 17px;
    padding: 0 3px;
    border: 1px solid #bbb;
    color: #555;
    font-size: 11px;
    font-weight: 400;
}

.navbar {
    position: absolute;
    left: 508px;
    bottom: 5px;
    display: flex;
    align-items: center;
    gap: 7px;
    height: 21px;
    padding: 0 9px 0 3px;
    background-color: #f0f0f0;
}
.navbar .fit {
    margin-right: 8px;
}

/* timeline */
.timeline {
    display: flex;
    align-items: center;
    height: 43px;
    padding: 0 15px 0 8px;
    background: linear-gradient(#f2f2f2, #e2e2e2);
    border-top: 1px solid #bbb;
    border-radius: 0 0 4px 4px;
}
.playback {
    display: flex;
    gap: 10px;
}
.feature {
    margin-left: 17px;
}
.settings {
    margin-left: auto;
}
```
